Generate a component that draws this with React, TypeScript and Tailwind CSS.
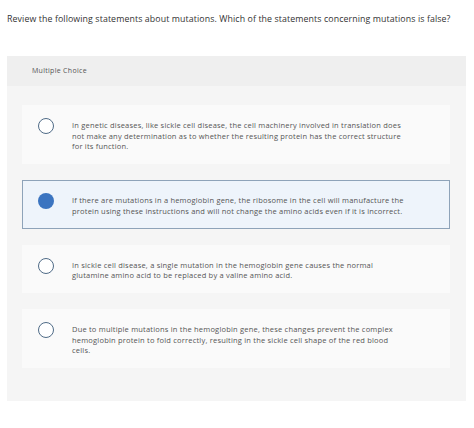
import React from "react";

const options = [
  [
    "In genetic diseases, like sickle cell disease, the cell machinery involved in translation does",
    "not make any determination as to whether the resulting protein has the correct structure",
    "for its function.",
  ],
  [
    "If there are mutations in a hemoglobin gene, the ribosome in the cell will manufacture the",
    "protein using these instructions and will not change the amino acids even if it is incorrect.",
  ],
  [
    "In sickle cell disease, a single mutation in the hemoglobin gene causes the normal",
    "glutamine amino acid to be replaced by a valine amino acid.",
  ],
  [
    "Due to multiple mutations in the hemoglobin gene, these changes prevent the complex",
    "hemoglobin protein to fold correctly, resulting in the sickle cell shape of the red blood",
    "cells.",
  ],
];

export default function App() {
  return (
    <div
      className="w-[474px] h-[428px] bg-white overflow-hidden"
      style={{ fontFamily: "'Open Sans', sans-serif" }}
    >
      <div className="pt-[13px] pl-[7px] text-[8.8px] leading-[13px] tracking-[0.1px] text-[#333] whitespace-nowrap">
        Review the following statements about mutations. Which of the statements concerning mutations is false?
      </div>
      <div className="mt-[30px] ml-[7px] w-[459px] bg-[#f5f5f5]">
        <div className="h-[30px] bg-[#efefef] flex items-center pl-[25px] text-[7px] tracking-[0.3px] text-[#555]">
          Multiple Choice
        </div>
        <div className="pt-[19px] pb-[33px] pl-[15px] pr-[16px] flex flex-col gap-[16px]">
          {options.map((lines, i) => {
            const sel = i === 1;
            return (
              <div
                key={i}
                className={
                  sel
                    ? "flex items-start border border-[#8ea3b9] bg-[#eef4fb] pt-[14px] pb-[11px] pl-[15px]"
                    : "flex items-start border border-transparent bg-[#fafafa] pt-[14px] pb-[11px] pl-[15px]"
                }
              >
                {sel ? (
                  <div className="w-[16px] h-[16px] shrink-0 rounded-full bg-[#3b74c0] -mt-[2px]" />
                ) : (
                  <div className="w-[16px] h-[16px] shrink-0 rounded-full border-[1.5px] border-[#4f6b87] bg-white -mt-[2px]" />
                )}
                <div className="ml-[18px] text-[7.5px] leading-[10.7px] tracking-[0.2px] text-[#555] whitespace-nowrap">
                  {lines.map((l, j) => (
                    <div key={j}>{l}</div>
                  ))}
                </div>
              </div>
            );
          })}
        </div>
      </div>
    </div>
  );
}
